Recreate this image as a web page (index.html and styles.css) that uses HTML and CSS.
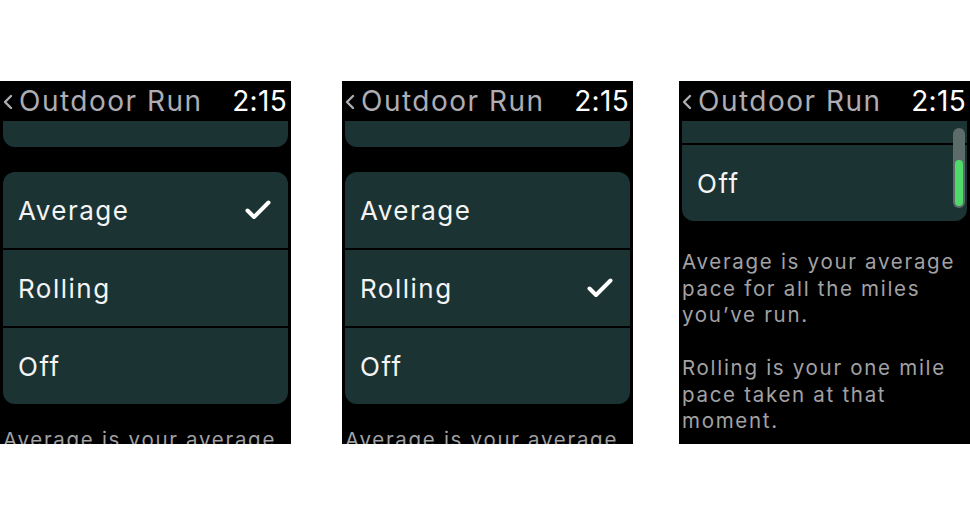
FILE: index.html
```html
<!DOCTYPE html>
<html>
<head>
<meta charset="utf-8">
<link rel="stylesheet" href="styles.css">
</head>
<body>
<main class="strip">
  <section class="screen">
    <header class="bar">
      <svg class="back" width="10" height="16" viewBox="0 0 10 16"><polyline points="8,2 2,8 8,14" fill="none" stroke="#adadb3" stroke-width="2.4" stroke-linecap="round" stroke-linejoin="round"/></svg>
      <span class="title">Outdoor Run</span>
      <span class="time">2:15</span>
    </header>
    <div class="viewport">
      <div class="content">
        <div class="card tail"></div>
        <div class="group">
          <div class="row"><span>Average</span><svg class="check" width="26" height="20" viewBox="0 0 26 20"><polyline points="2.5,10.5 9,17 23.5,2.5" fill="none" stroke="#fff" stroke-width="4" stroke-linecap="round" stroke-linejoin="round"/></svg></div>
          <div class="row"><span>Rolling</span></div>
          <div class="row"><span>Off</span></div>
        </div>
        <p class="desc">Average is your average pace for all the miles you’ve run.</p>
      </div>
    </div>
  </section>

  <section class="screen screen-2">
    <header class="bar">
      <svg class="back" width="10" height="16" viewBox="0 0 10 16"><polyline points="8,2 2,8 8,14" fill="none" stroke="#adadb3" stroke-width="2.4" stroke-linecap="round" stroke-linejoin="round"/></svg>
      <span class="title">Outdoor Run</span>
      <span class="time">2:15</span>
    </header>
    <div class="viewport">
      <div class="content">
        <div class="card tail"></div>
        <div class="group">
          <div class="row"><span>Average</span></div>
          <div class="row"><span>Rolling</span><svg class="check" width="26" height="20" viewBox="0 0 26 20"><polyline points="2.5,10.5 9,17 23.5,2.5" fill="none" stroke="#fff" stroke-width="4" stroke-linecap="round" stroke-linejoin="round"/></svg></div>
          <div class="row"><span>Off</span></div>
        </div>
        <p class="desc">Average is your average pace for all the miles you’ve run.</p>
      </div>
    </div>
  </section>

  <section class="screen screen-3">
    <header class="bar">
      <svg class="back" width="10" height="16" viewBox="0 0 10 16"><polyline points="8,2 2,8 8,14" fill="none" stroke="#adadb3" stroke-width="2.4" stroke-linecap="round" stroke-linejoin="round"/></svg>
      <span class="title">Outdoor Run</span>
      <span class="time">2:15</span>
    </header>
    <div class="viewport">
      <div class="content">
        <div class="group cut">
          <div class="row row-tail"></div>
          <div class="row"><span>Off</span></div>
        </div>
        <p class="desc first">Average is your average pace for all the miles you’ve run.</p>
        <p class="desc next">Rolling is your one mile pace taken at that moment.</p>
      </div>
    </div>
    <div class="scrollbar"><div class="thumb"></div></div>
  </section>
</main>
</body>
</html>
```

FILE: styles.css
```css
* { box-sizing: border-box; }
html, body {
  margin: 0;
  padding: 0;
  background: #ffffff;
}
body {
  width: 970px;
  height: 510px;
  overflow: hidden;
  font-family: Inter, "Noto Sans", sans-serif;
}
.strip {
  display: flex;
  padding-top: 81px;
}
.screen {
  position: relative;
  width: 291px;
  height: 363px;
  background: #000;
  flex: none;
}
.screen-2 { margin-left: 51px; }
.screen-3 { margin-left: 46px; }

.bar {
  height: 40px;
  display: flex;
  align-items: center;
  padding: 0 4px 0 3px;
}
.back {
  flex: none;
  margin-right: 6px;
  margin-top: 2px;
}
.title {
  flex: 1;
  white-space: nowrap;
  color: #adadb3;
  font-size: 28px;
  line-height: 30px;
  letter-spacing: 1.5px;
}
.time {
  flex: none;
  color: #ffffff;
  font-size: 28px;
  line-height: 30px;
  letter-spacing: 0.3px;
}

.viewport {
  height: 323px;
  overflow: hidden;
  padding: 0 3px;
}
.content {
  display: flex;
  flex-direction: column;
}

.card {
  background: #1c3334;
}
.tail {
  height: 26px;
  border-radius: 0 0 12px 12px;
  margin-bottom: 25px;
}
.group {
  display: flex;
  flex-direction: column;
  gap: 2px;
  border-radius: 12px;
  overflow: hidden;
}
.group.cut { border-radius: 0 0 12px 12px; }
.row {
  height: 76px;
  background: #1c3334;
  display: flex;
  align-items: center;
  justify-content: space-between;
  padding: 0 17px 0 15px;
  color: #f4f4f4;
  font-size: 26px;
  letter-spacing: 1.5px;
}
.row.row-tail { height: 22px; }
.check { flex: none; }

.desc {
  margin: 23px 0 0;
  color: #a2a2a4;
  font-size: 20.5px;
  line-height: 26.5px;
  letter-spacing: 1.7px;
}
.desc.first { margin-top: 28px; }
.desc.next { margin-top: 26.5px; }

.scrollbar {
  position: absolute;
  left: 274px;
  top: 47px;
  width: 12px;
  height: 80px;
  border-radius: 6px;
  background: #5d6b6b;
  padding: 2px;
  display: flex;
  flex-direction: column;
  justify-content: flex-end;
}
.thumb {
  height: 46px;
  border-radius: 4px;
  background: #4fd96a;
}
```
